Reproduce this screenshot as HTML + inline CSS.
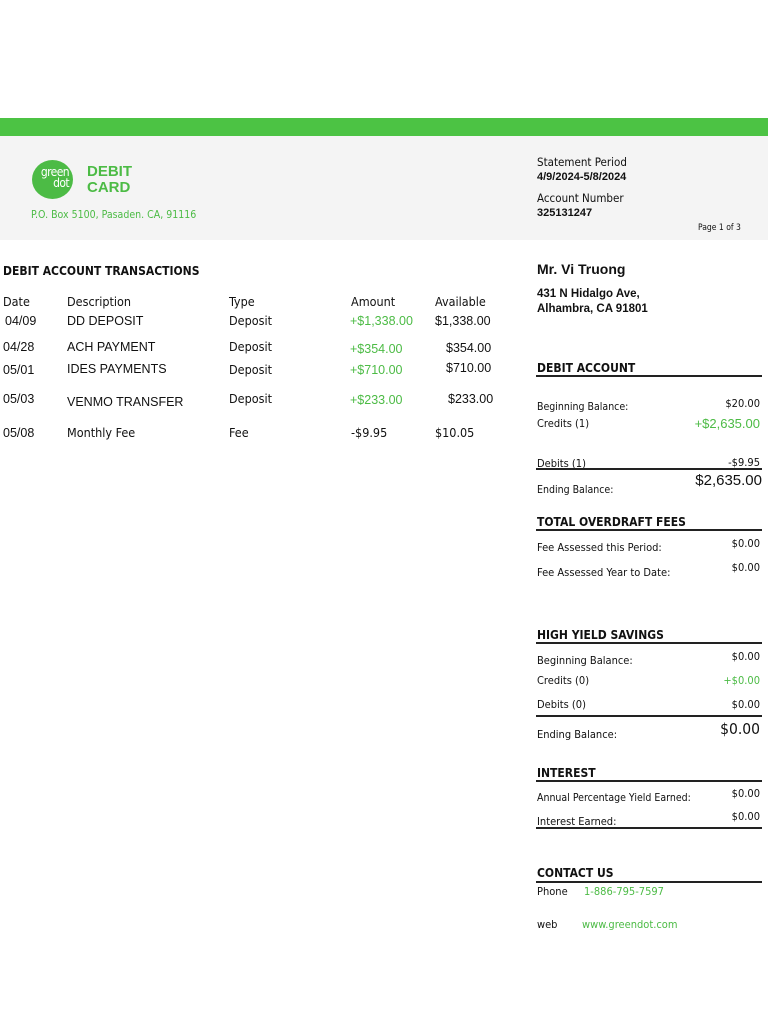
<!DOCTYPE html>
<html><head><meta charset="utf-8"><style>
body{margin:0;width:768px;height:1024px;position:relative;background:#fff;font-family:"Liberation Sans",sans-serif;color:#111;overflow:hidden}
.t{position:absolute;line-height:1;white-space:nowrap}
.c{font-family:"DejaVu Sans Condensed","Liberation Sans",sans-serif}
.g{color:#4cbb45}
.r{right:8px;text-align:right}
.b{font-weight:bold}
.ln{position:absolute;left:536px;width:226px;height:2px;background:#222}
</style></head><body>
<div style="position:absolute;left:0;top:118px;width:768px;height:18px;background:#4cc344"></div>
<div style="position:absolute;left:0;top:136px;width:768px;height:104px;background:#f4f4f4"></div>
<div style="position:absolute;left:32px;top:160px;width:41px;height:39px;border-radius:50%;background:#4cbb45"></div>
<div class="t" style="left:36px;top:167px;font-size:12px;color:#fff;font-family:'DejaVu Sans Condensed',sans-serif;text-align:right;width:33px;line-height:11px;letter-spacing:-0.6px">green<br>dot</div>
<div class="t b g" style="left:87px;top:164px;font-size:15px;line-height:16px">DEBIT<br>CARD</div>
<div class="t g c" style="left:31px;top:210px;font-size:10.5px">P.O. Box 5100, Pasaden. CA, 91116</div>
<div class="t c" style="left:537px;top:157px;font-size:11.5px">Statement Period</div>
<div class="t b" style="left:537px;top:172px;font-size:11px">4/9/2024-5/8/2024</div>
<div class="t c" style="left:537px;top:193px;font-size:11.5px">Account Number</div>
<div class="t b" style="left:537px;top:208px;font-size:11px">325131247</div>
<div class="t c" style="left:698px;top:224px;font-size:8.5px">Page 1 of 3</div>

<div class="t b c" style="left:3px;top:265px;font-size:12px">DEBIT ACCOUNT TRANSACTIONS</div>
<div class="t c" style="left:3px;top:296px;font-size:12.5px">Date</div>
<div class="t c" style="left:67px;top:296px;font-size:12.5px">Description</div>
<div class="t c" style="left:229px;top:296px;font-size:12.5px">Type</div>
<div class="t c" style="left:351px;top:296px;font-size:12.5px">Amount</div>
<div class="t c" style="left:435px;top:296px;font-size:12.5px">Available</div>

<div class="t" style="left:5px;top:315px;font-size:12.5px">04/09</div>
<div class="t" style="left:67px;top:315px;font-size:12.5px">DD DEPOSIT</div>
<div class="t c" style="left:229px;top:315px;font-size:12.5px">Deposit</div>
<div class="t g" style="left:350px;top:315px;font-size:12.5px">+$1,338.00</div>
<div class="t" style="left:435px;top:315px;font-size:12.5px">$1,338.00</div>

<div class="t" style="left:3px;top:341px;font-size:12.5px">04/28</div>
<div class="t" style="left:67px;top:341px;font-size:12.5px">ACH PAYMENT</div>
<div class="t c" style="left:229px;top:341px;font-size:12.5px">Deposit</div>
<div class="t g" style="left:350px;top:343px;font-size:12.5px">+$354.00</div>
<div class="t" style="left:446px;top:342px;font-size:12.5px">$354.00</div>

<div class="t" style="left:3px;top:364px;font-size:12.5px">05/01</div>
<div class="t" style="left:67px;top:363px;font-size:12.5px">IDES PAYMENTS</div>
<div class="t c" style="left:229px;top:364px;font-size:12.5px">Deposit</div>
<div class="t g" style="left:350px;top:364px;font-size:12.5px">+$710.00</div>
<div class="t" style="left:446px;top:362px;font-size:12.5px">$710.00</div>

<div class="t" style="left:3px;top:393px;font-size:12.5px">05/03</div>
<div class="t" style="left:67px;top:396px;font-size:12.5px">VENMO TRANSFER</div>
<div class="t c" style="left:229px;top:393px;font-size:12.5px">Deposit</div>
<div class="t g" style="left:350px;top:394px;font-size:12.5px">+$233.00</div>
<div class="t" style="left:448px;top:393px;font-size:12.5px">$233.00</div>

<div class="t" style="left:3px;top:427px;font-size:12.5px">05/08</div>
<div class="t c" style="left:67px;top:427px;font-size:12.5px">Monthly Fee</div>
<div class="t c" style="left:229px;top:427px;font-size:12.5px">Fee</div>
<div class="t c" style="left:351px;top:427px;font-size:12.5px">-$9.95</div>
<div class="t c" style="left:435px;top:427px;font-size:12.5px">$10.05</div>

<div class="t b" style="left:537px;top:262px;font-size:14px">Mr. Vi Truong</div>
<div class="t b" style="left:537px;top:287px;font-size:11.5px;line-height:15px">431 N Hidalgo Ave,<br>Alhambra, CA 91801</div>

<div class="t b c" style="left:537px;top:362px;font-size:12px">DEBIT ACCOUNT</div>
<div class="ln" style="top:375px"></div>
<div class="t c" style="left:537px;top:402px;font-size:10.5px">Beginning Balance:</div>
<div class="t c r" style="top:398px;font-size:11px">$20.00</div>
<div class="t c" style="left:537px;top:418px;font-size:11px">Credits (1)</div>
<div class="t g r" style="top:417px;font-size:13px">+$2,635.00</div>
<div class="t c" style="left:537px;top:458px;font-size:11px">Debits (1)</div>
<div class="t c r" style="top:457px;font-size:11px">-$9.95</div>
<div class="ln" style="top:468px"></div>
<div class="t" style="right:6px;top:473px;font-size:15px">$2,635.00</div>
<div class="t c" style="left:537px;top:485px;font-size:10.5px">Ending Balance:</div>

<div class="t b c" style="left:537px;top:516px;font-size:12px">TOTAL OVERDRAFT FEES</div>
<div class="ln" style="top:529px"></div>
<div class="t c" style="left:537px;top:542px;font-size:11px">Fee Assessed this Period:</div>
<div class="t c r" style="top:538px;font-size:11px">$0.00</div>
<div class="t c" style="left:537px;top:567px;font-size:11px">Fee Assessed Year to Date:</div>
<div class="t c r" style="top:562px;font-size:11px">$0.00</div>

<div class="t b c" style="left:537px;top:629px;font-size:12px">HIGH YIELD SAVINGS</div>
<div class="ln" style="top:642px"></div>
<div class="t c" style="left:537px;top:655px;font-size:11px">Beginning Balance:</div>
<div class="t c r" style="top:651px;font-size:11px">$0.00</div>
<div class="t c" style="left:537px;top:675px;font-size:11px">Credits (0)</div>
<div class="t c r g" style="top:675px;font-size:11px">+$0.00</div>
<div class="t c" style="left:537px;top:699px;font-size:11px">Debits (0)</div>
<div class="t c r" style="top:699px;font-size:11px">$0.00</div>
<div class="ln" style="top:715px"></div>
<div class="t c" style="left:537px;top:729px;font-size:11px">Ending Balance:</div>
<div class="t c r" style="top:722px;font-size:15.5px">$0.00</div>

<div class="t b c" style="left:537px;top:767px;font-size:12px">INTEREST</div>
<div class="ln" style="top:780px"></div>
<div class="t c" style="left:537px;top:793px;font-size:10.5px">Annual Percentage Yield Earned:</div>
<div class="t c r" style="top:788px;font-size:11px">$0.00</div>
<div class="t c" style="left:537px;top:816px;font-size:11px">Interest Earned:</div>
<div class="t c r" style="top:811px;font-size:11px">$0.00</div>
<div class="ln" style="top:827px"></div>

<div class="t b c" style="left:537px;top:867px;font-size:12px">CONTACT US</div>
<div class="ln" style="top:881px"></div>
<div class="t c" style="left:537px;top:886px;font-size:11px">Phone</div>
<div class="t c g" style="left:584px;top:886px;font-size:11px">1-886-795-7597</div>
<div class="t c" style="left:537px;top:919px;font-size:11px">web</div>
<div class="t c g" style="left:582px;top:919px;font-size:11px">www.greendot.com</div>
</body></html>
